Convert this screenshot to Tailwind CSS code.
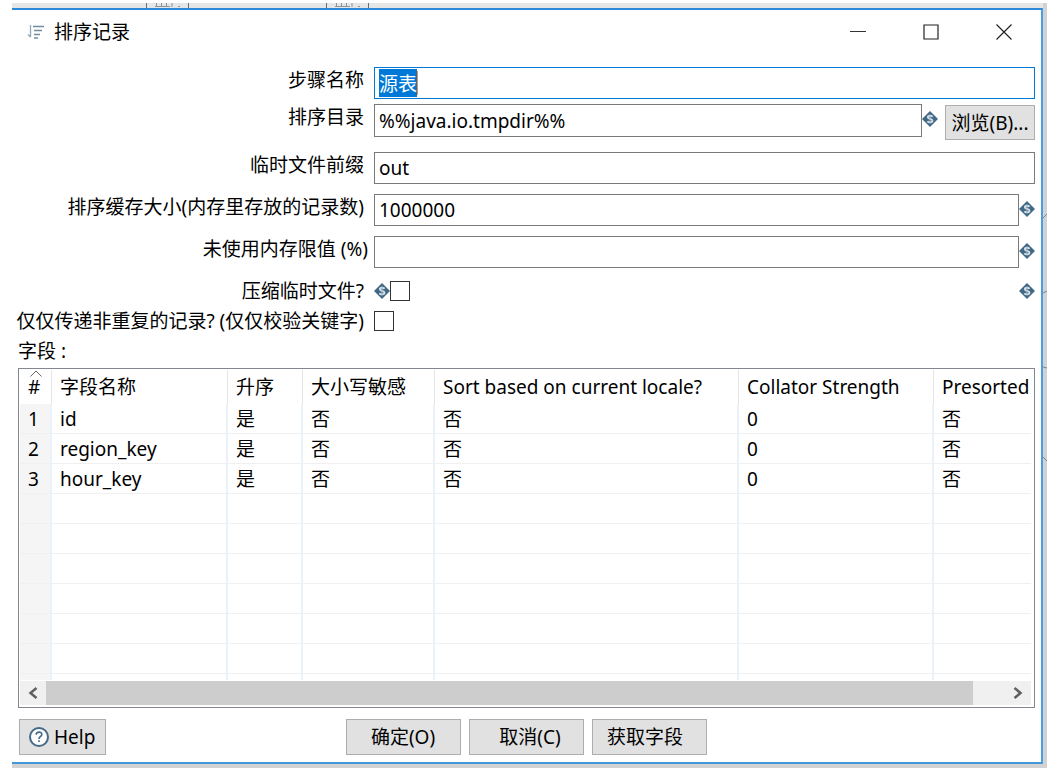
<!DOCTYPE html>
<html lang="zh-CN">

<head>
  <meta charset="UTF-8" />
  <meta name="viewport" content="width=device-width, initial-scale=1.0" />
  <title>排序记录</title>
  <script src="https://cdn.jsdelivr.net/npm/@tailwindcss/browser@4"></script>
</head>

<body class="bg-white pl-3 pt-[3px] min-h-screen flex flex-col font-['Noto_Sans','Noto_Sans_CJK_SC',sans-serif] text-[19px] leading-[26px] text-black overflow-hidden">

  <!-- Shared icons -->
  <svg class="hidden">
    <symbol id="variable" viewBox="0 0 16 16">
      <path d="M8 0 16 8 8 16 0 8Z" fill="#416986" />
      <path d="M10.600 5.800C9.800 4.400 5.800 4.200 5.800 6.300 5.800 8.300 10.500 7.500 10.500 9.700 10.500 11.900 6.300 11.700 5.400 10.200" fill="none" stroke="#d5dfe6" stroke-width="1.800" />
      <path d="M8 3.500V12.500" stroke="#a9bcc9" stroke-width="1" />
    </symbol>
  </svg>

  <!-- Canvas behind the dialog -->
  <div class="relative flex-grow flex flex-col bg-[#d2d2d2] pr-1 pb-1">
    <svg class="h-[5px] w-full bg-[#e6e6e6]" fill="none" stroke="#5f7482">
      <path d="M134.500 0V5M176.500 0V5M314.500 0V5M356.500 0V5" />
      <path d="M143 3.500H158M144.500 0V4M149.500 0V4M154.500 0V4M160 0V4M166 3.500H168M323 3.500H338M324.500 0V4M329.500 0V4M334.500 0V4M340 0V4M346 3.500H348" stroke="#8b959c" />
    </svg>
    <svg class="absolute right-0 top-0 w-1 h-full" fill="none" stroke="#71879a">
      <path d="M0 215 4 211M0 290 4 288M0 364 4 365M0 454 4 458" />
    </svg>

    <!-- Dialog -->
    <div class="flex-grow flex flex-col bg-white border-y-2 border-r-2 border-t-[#2c8ad8] border-b-[#4496d6] border-r-[#4a9fe0]">

      <!-- Title bar -->
      <header class="flex items-center h-[44px] pl-[15px] pr-[29px]">
        <svg class="w-[18px] h-4" viewBox="0 0 18 16" fill="none" stroke="#6f8da0" stroke-width="1.3">
          <path d="M3.500 1V13M1 10.500 3.500 13" stroke="#91a9b7" />
          <path d="M6 2.500H17M7 6.500H15M7 10.500H13M7 14H11" />
        </svg>
        <h1 class="ml-[9px] flex-grow">排序记录</h1>
        <div class="flex items-center gap-[57px]">
          <button type="button" aria-label="最小化">
            <svg class="w-4 h-4" viewBox="0 0 16 16" stroke="#333"><path d="M0 7.500H16" /></svg>
          </button>
          <button type="button" aria-label="最大化">
            <svg class="w-4 h-4" viewBox="0 0 16 16" fill="none" stroke="#222"><path d="M1 1H15V15H1Z" stroke-width="1.2" /></svg>
          </button>
          <button type="button" aria-label="关闭">
            <svg class="w-4 h-4" viewBox="0 0 16 16" stroke="#222" stroke-width="1.2"><path d="M0.500 0.500 15.500 15.500M15.500 0.500 0.500 15.500" /></svg>
          </button>
        </div>
      </header>

      <form class="flex-grow flex flex-col pt-[13px] pr-[6px]">
        <!-- Settings -->
        <div class="flex items-start mb-[5px]">
          <label for="step" class="w-[356px] pr-1 mr-[6px] text-right whitespace-nowrap">步骤名称</label>
          <div class="relative flex-1 flex">
            <input id="step" type="text" value="源表" autofocus class="w-full h-8 px-1 border border-[#0078d7] bg-white outline-none caret-transparent selection:bg-[#0078d7] selection:text-white" />
            <span class="absolute left-[43px] top-1 w-px h-6 bg-[#ff8728]"></span>
          </div>
        </div>
        <div class="flex items-start mb-[15px]">
          <label for="dir" class="w-[356px] pr-1 mr-[6px] text-right whitespace-nowrap">排序目录</label>
          <input id="dir" type="text" value="%%java.io.tmpdir%%" class="flex-1 min-w-0 h-[33px] px-1 border border-[#7a7a7a] bg-white outline-none" />
          <svg class="w-4 h-4 mt-[7px]"><use href="#variable" /></svg>
          <button type="button" class="ml-[7px] w-[90px] h-[35px] -mb-[3px] mt-px border border-[#adadad] bg-[#e1e1e1] whitespace-nowrap">浏览(B)...</button>
        </div>
        <div class="flex items-start mb-[10px]">
          <label for="prefix" class="w-[356px] pr-1 mr-[6px] text-right whitespace-nowrap">临时文件前缀</label>
          <input id="prefix" type="text" value="out" class="flex-1 min-w-0 h-8 px-1 border border-[#7a7a7a] bg-white outline-none" />
        </div>
        <div class="flex items-start mb-[10px]">
          <label for="cache" class="w-[356px] pr-1 mr-[6px] text-right whitespace-nowrap">排序缓存大小(内存里存放的记录数)</label>
          <input id="cache" type="text" value="1000000" class="flex-1 min-w-0 h-8 px-1 border border-[#7a7a7a] bg-white outline-none" />
          <svg class="w-4 h-4 mt-[7px]"><use href="#variable" /></svg>
        </div>
        <div class="flex items-start mb-[10px]">
          <label for="free" class="w-[356px] mr-[6px] text-right whitespace-nowrap">未使用内存限值 (%)</label>
          <input id="free" type="text" class="flex-1 min-w-0 h-8 px-1 border border-[#7a7a7a] bg-white outline-none" />
          <svg class="w-4 h-4 mt-[7px]"><use href="#variable" /></svg>
        </div>
        <div class="flex items-center mb-1">
          <label for="compress" class="w-[356px] pr-1 mr-[6px] text-right whitespace-nowrap">压缩临时文件?</label>
          <svg class="w-4 h-4"><use href="#variable" /></svg>
          <input id="compress" type="checkbox" class="appearance-none w-5 h-5 border border-[#333] bg-white" />
          <svg class="w-4 h-4 ml-auto"><use href="#variable" /></svg>
        </div>
        <div class="flex items-center mb-1">
          <label for="unique" class="w-[356px] pr-1 mr-[6px] text-right whitespace-nowrap">仅仅传递非重复的记录? (仅仅校验关键字)</label>
          <input id="unique" type="checkbox" class="appearance-none w-5 h-5 border border-[#333] bg-white" />
        </div>
        <p class="pl-[6px] mb-1">字段 :</p>

        <!-- Sort fields -->
        <div class="flex-grow flex flex-col ml-[6px] border border-[#828790] p-px pr-[3px] pb-[2px]">
          <div class="flex-grow basis-0 overflow-hidden">
            <table class="table-fixed w-full border-separate border-spacing-0 text-left [&_th]:font-normal [&_th]:p-0 [&_th]:pl-2 [&_th]:whitespace-nowrap [&_th]:border-r [&_th]:border-[#e5e5e5] [&_th:last-child]:border-r-0 [&_td]:h-[30px] [&_td]:p-0 [&_td]:pl-2 [&_td]:border-r-2 [&_td]:border-b [&_td]:border-r-[#ebf1f8] [&_td]:border-b-[#f0f0f0] [&_td:last-child]:border-r-0">
              <colgroup>
                <col class="w-8" />
                <col class="w-[176px]" />
                <col class="w-[75px]" />
                <col class="w-[132px]" />
                <col class="w-[304px]" />
                <col class="w-[195px]" />
                <col />
              </colgroup>
              <thead>
                <tr class="h-[34px]">
                  <th class="relative">#
                    <svg class="absolute left-[10px] top-0 w-3 h-[7px]" viewBox="0 0 12 7" fill="none" stroke="#666"><path d="M0.500 6.500 6 1 11.500 6.500" /></svg>
                  </th>
                  <th>字段名称</th>
                  <th>升序</th>
                  <th>大小写敏感</th>
                  <th>Sort based on current locale?</th>
                  <th>Collator Strength</th>
                  <th>Presorted</th>
                </tr>
              </thead>
              <tbody>
                <tr><td class="bg-[#f5f5f5]">1</td><td>id</td><td>是</td><td>否</td><td>否</td><td>0</td><td>否</td></tr>
                <tr><td class="bg-[#f5f5f5]">2</td><td>region_key</td><td>是</td><td>否</td><td>否</td><td>0</td><td>否</td></tr>
                <tr><td class="bg-[#f5f5f5]">3</td><td>hour_key</td><td>是</td><td>否</td><td>否</td><td>0</td><td>否</td></tr>
                <tr><td class="bg-[#f5f5f5]"></td><td></td><td></td><td></td><td></td><td></td><td></td></tr>
                <tr><td class="bg-[#f5f5f5]"></td><td></td><td></td><td></td><td></td><td></td><td></td></tr>
                <tr><td class="bg-[#f5f5f5]"></td><td></td><td></td><td></td><td></td><td></td><td></td></tr>
                <tr><td class="bg-[#f5f5f5]"></td><td></td><td></td><td></td><td></td><td></td><td></td></tr>
                <tr><td class="bg-[#f5f5f5]"></td><td></td><td></td><td></td><td></td><td></td><td></td></tr>
                <tr><td class="bg-[#f5f5f5]"></td><td></td><td></td><td></td><td></td><td></td><td></td></tr>
                <tr><td class="bg-[#f5f5f5]"></td><td></td><td></td><td></td><td></td><td></td><td></td></tr>
              </tbody>
            </table>
          </div>

          <!-- Horizontal scrollbar -->
          <div class="flex h-6 mt-px bg-[#f0f0f0]">
            <button type="button" aria-label="向左滚动" class="w-[26px] flex items-center justify-center">
              <svg class="w-[10px] h-3" viewBox="0 0 10 12" fill="none" stroke="#606060" stroke-width="2.500"><path d="M8.500 1 2.500 6 8.500 11" /></svg>
            </button>
            <div class="flex-1">
              <div class="h-full w-[96.7%] bg-[#cdcdcd]"></div>
            </div>
            <button type="button" aria-label="向右滚动" class="w-[26px] flex items-center justify-center">
              <svg class="w-[10px] h-3" viewBox="0 0 10 12" fill="none" stroke="#606060" stroke-width="2.500"><path d="M1.500 1 7.500 6 1.500 11" /></svg>
            </button>
          </div>
        </div>

        <!-- Buttons -->
        <div class="relative flex justify-center gap-2 mt-[11px] mb-[7px] pl-[5px]">
          <button type="button" class="absolute left-[7px] top-0 w-[87px] h-9 flex items-center pl-[9px] gap-[5px] border border-[#adadad] bg-[#e1e1e1]">
            <svg class="w-5 h-5" viewBox="0 0 20 20" fill="none" stroke="#446a87">
              <circle cx="10" cy="10" r="9" fill="#fff" stroke-width="2" />
              <path d="M7.200 7.800C7.200 4.300 13 4.300 12.800 7.600 12.700 9.400 10 9.400 10 12M10 13.200V15" stroke-width="1.600" />
            </svg>
            Help
          </button>
          <button type="submit" class="w-[115px] h-9 border border-[#adadad] bg-[#e1e1e1]">确定(O)</button>
          <button type="button" class="w-[115px] h-9 pl-2 border border-[#adadad] bg-[#e1e1e1]">取消(C)</button>
          <button type="button" class="w-[115px] h-9 pr-2 border border-[#adadad] bg-[#e1e1e1]">获取字段</button>
        </div>
      </form>
    </div>
  </div>

  <script>
    const step = document.querySelector('#step');
    step.focus();
    step.select();
  </script>
</body>

</html>
